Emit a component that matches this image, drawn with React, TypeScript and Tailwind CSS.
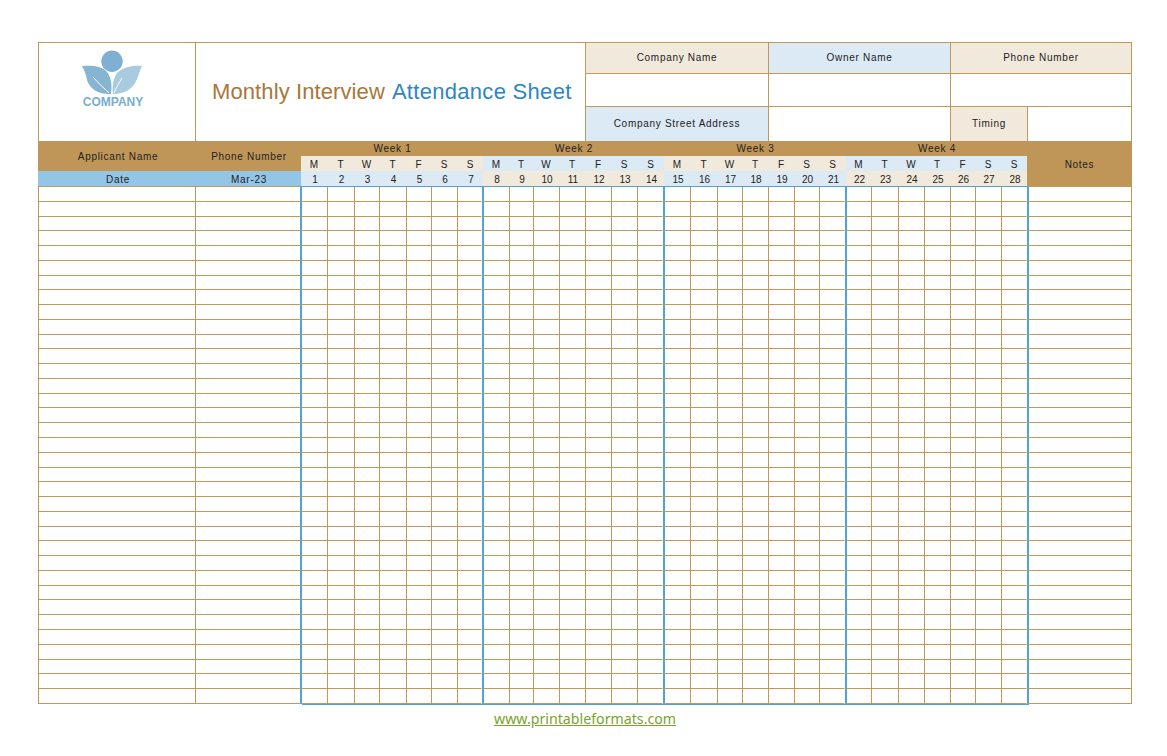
const weeks = [
  { label: 'Week 1', days: [1, 2, 3, 4, 5, 6, 7], dayBg: 'bg-[#f2e9dd]', dateBg: 'bg-[#dbeaf5]' },
  { label: 'Week 2', days: [8, 9, 10, 11, 12, 13, 14], dayBg: 'bg-[#dbeaf5]', dateBg: 'bg-[#f2e9dd]' },
  { label: 'Week 3', days: [15, 16, 17, 18, 19, 20, 21], dayBg: 'bg-[#f2e9dd]', dateBg: 'bg-[#dbeaf5]' },
  { label: 'Week 4', days: [22, 23, 24, 25, 26, 27, 28], dayBg: 'bg-[#dbeaf5]', dateBg: 'bg-[#f2e9dd]' },
];
const letters = ['M', 'T', 'W', 'T', 'F', 'S', 'S'];
const rows = Array.from({ length: 35 }, (_, i) => i);

const headColumns =
  'grid-cols-[157px_106px_26px_27px_25px_27px_25px_26px_26px_26px_24px_26px_26px_26px_26px_27px_26px_27px_25px_26px_26px_25px_27px_25px_27px_26px_26px_25px_26px_26px_104px]';
// the blue week lines sit one pixel left of the header cells
const bodyColumns =
  'grid-cols-[157px_105px_27px_27px_25px_27px_25px_26px_25px_27px_24px_26px_26px_26px_26px_26px_27px_27px_25px_26px_26px_25px_26px_26px_27px_26px_26px_25px_26px_26px_105px]';

function Logo() {
  return (
    <div className="flex flex-col items-center w-[62px]">
      <svg width="62" height="46" viewBox="0 0 62 46">
        <circle cx="31" cy="11.3" r="10.7" fill="#7fb0d4" />
        <path d="M1 16 C10 15 22 16 26 22 C31 28 31 38 30 44 C21 44 10 42 6 30 C5 24 3 20 1 16 Z" fill="#86b5d4" />
        <path d="M61 16 C52 15 42 17 36 23 C32 29 31 37 32 44 C42 44 52 40 56 29 C58 24 59 20 61 16 Z" fill="#a9cbe0" />
        <path d="M12 27 C17 33 23 38 28 43" stroke="#ffffff" strokeWidth="1" fill="none" />
        <path d="M41 28 C38 33 35 38 33 43" stroke="#ffffff" strokeWidth="1" fill="none" />
      </svg>
      <span className="pl-[2px] text-[12px] leading-[13px] font-bold whitespace-nowrap text-[#78aed1]">COMPANY</span>
    </div>
  );
}

function InfoCell({ label, bg, className }: { label?: string; bg?: string; className?: string }) {
  return (
    <div className={`flex items-center justify-center pb-[2px] border-r border-b border-[#c19859] tracking-[0.7px] ${bg ?? ''} ${className ?? ''}`}>
      {label}
    </div>
  );
}

export default function App() {
  return (
    <div className="bg-white w-[1167px] h-[756px] pt-[42px] pl-[38px] text-[10px] text-[#222222] font-['Liberation_Sans',Arial,sans-serif]">
      <div className="w-[1094px]">
        {/* top block */}
        <div className="flex h-[99px] border-t border-l border-[#c19859]">
          <div className="w-[156px] shrink-0 pt-[7px] pl-[42px]">
            <Logo />
          </div>
          <div className="w-[391px] shrink-0 border-l border-r border-[#c19859] flex items-center pl-[16px] pb-[2px] text-[22px]">
            <span className="text-[#a8773a] tracking-[0.1px]">Monthly Interview</span>
            <span className="ml-[7px] text-[#2e86bf] tracking-[0.3px]">Attendance Sheet</span>
          </div>
          <div className="flex-1 grid grid-cols-[183px_182px_77px_104px] grid-rows-[31px_33px_34px]">
            <InfoCell label="Company Name" bg="bg-[#f2e9dd]" />
            <InfoCell label="Owner Name" bg="bg-[#dbeaf5]" />
            <InfoCell label="Phone Number" bg="bg-[#f2e9dd]" className="col-span-2" />
            <InfoCell />
            <InfoCell />
            <InfoCell className="col-span-2" />
            <InfoCell label="Company Street Address" bg="bg-[#dbeaf5]" className="border-b-0" />
            <InfoCell className="border-b-0" />
            <InfoCell label="Timing" bg="bg-[#f2e9dd]" className="border-b-0" />
            <InfoCell className="border-b-0" />
          </div>
        </div>

        {/* header band */}
        <div className={`grid ${headColumns} grid-rows-[15px_15px_15px] bg-[#bf9657]`}>
          <div className="row-span-2 flex items-center justify-center pl-[3px] tracking-[0.7px]">Applicant Name</div>
          <div className="row-span-2 flex items-center justify-center pl-[2px] tracking-[0.7px]">Phone Number</div>
          {weeks.map((w) => (
            <div key={w.label} className="col-span-7 flex items-center justify-center pl-[1px] tracking-[0.7px]">
              {w.label}
            </div>
          ))}
          <div className="row-span-3 flex items-center justify-center pt-[2px] pl-[1px] tracking-[0.7px]">Notes</div>
          {weeks.map((w) =>
            letters.map((l, i) => (
              <div key={w.label + i} className={`flex items-center justify-center pt-[1px] ${w.dayBg}`}>
                {l}
              </div>
            )),
          )}
          <div className="flex items-center justify-center pt-[1px] pl-[3px] bg-[#92c5e6] tracking-[0.7px]">Date</div>
          <div className="flex items-center justify-center pt-[1px] pl-[2px] bg-[#92c5e6] tracking-[0.7px]">Mar-23</div>
          {weeks.map((w) =>
            w.days.map((d) => (
              <div key={d} className={`flex items-center justify-center pt-[1px] pl-[2px] ${w.dateBg}`}>
                {d}
              </div>
            )),
          )}
        </div>

        {/* top rule of the data rows */}
        <div className="flex h-[1px] bg-[#c19859]">
          <div className="w-[263px]" />
          <div className="w-[727px] bg-[#4fa3d8]" />
        </div>

        {/* data rows */}
        <div className={`grid ${bodyColumns} auto-rows-[14.77px]`}>
          {rows.map((r) => (
            <div key={r} className="contents">
              <div className="border-l border-b border-[#c19859]" />
              <div className="border-l border-b border-[#c19859]" />
              {weeks.map((w) =>
                w.days.map((d, i) => (
                  <div
                    key={d}
                    className={`border-b border-b-[#c19859] ${i === 0 ? 'border-l-2 border-l-[#4fa3d8]' : 'border-l border-l-[#c19859]'} ${i === 6 ? 'border-r border-r-white' : ''}`}
                  />
                )),
              )}
              <div className="border-l-2 border-l-[#4fa3d8] border-r border-r-[#c19859] border-b border-b-[#c19859]" />
            </div>
          ))}
        </div>
        <div className="h-[2px] ml-[264px] w-[727px] bg-[#4fa3d8] -mt-[1px]" />
      </div>

      <div className="w-[1094px] mt-[4px] pl-[456px] text-[14.2px] leading-[20px] font-['Noto_Sans',sans-serif] text-[#7aa32f]">
        <a href="#" className="underline">
          www.printableformats.com
        </a>
      </div>
    </div>
  );
}
